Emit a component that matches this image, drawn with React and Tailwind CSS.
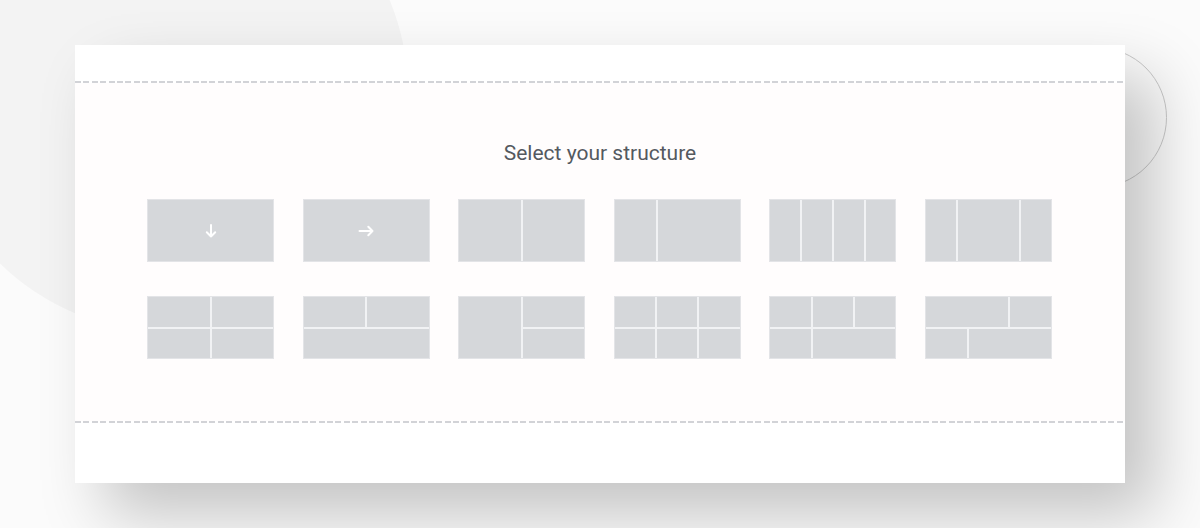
import React from "react";

const cell = "bg-[#d5d7da]";

function Frame({ children, dir = "col" }) {
  return (
    <div
      className={
        "w-[127px] h-[63px] border border-[#e3e4e7] bg-[#f1f2f4] flex gap-[2px] " +
        (dir === "col" ? "flex-col" : "flex-row")
      }
    >
      {children}
    </div>
  );
}

function Row({ parts }) {
  return (
    <div className="flex-1 flex gap-[2px]">
      {parts.map((p, i) => (
        <div key={i} className={cell} style={{ flex: p }} />
      ))}
    </div>
  );
}

function ArrowDown() {
  return (
    <svg width="16" height="16" viewBox="0 0 16 16" fill="none" stroke="#ffffff" strokeWidth="2" strokeLinecap="round" strokeLinejoin="round">
      <path d="M8 2v11.5M3.8 9.3L8 13.5l4.2-4.2" />
    </svg>
  );
}

function ArrowRight() {
  return (
    <svg width="18" height="16" viewBox="0 0 18 16" fill="none" stroke="#ffffff" strokeWidth="2" strokeLinecap="round" strokeLinejoin="round">
      <path d="M2.5 8h13M11.3 3.8L15.5 8l-4.2 4.2" />
    </svg>
  );
}

function Single({ icon }) {
  return (
    <Frame>
      <div className={"flex-1 flex items-center justify-center " + cell}>{icon}</div>
    </Frame>
  );
}

function Dashed() {
  return (
    <div className="h-[2px] w-full bg-[repeating-linear-gradient(90deg,#d2d3d7_0px,#d2d3d7_6px,transparent_6px,transparent_8.4px)]" />
  );
}

export default function App() {
  return (
    <div
      className="relative w-[1200px] h-[528px] overflow-hidden bg-[#fbfbfb]"
      style={{ fontFamily: "Roboto, 'Noto Sans', Arial, sans-serif" }}
    >
      {/* background decorations */}
      <div className="absolute left-[-72px] top-[-148px] w-[480px] h-[480px] rounded-full bg-[#f3f3f3]" />
      <div className="absolute left-[1026px] top-[47px] w-[141px] h-[141px] rounded-full border border-[#c9c9c9]" />

      <div className="relative ml-[75px] mt-[45px] w-[1050px] h-[438px] bg-white flex flex-col shadow-[30px_32px_60px_rgba(0,0,0,0.22)]">
        <div className="h-[36px]" />
        <Dashed />
        <div className="h-[338px] bg-[#fffdfd] flex flex-col items-center pt-[58px]">
          <div className="text-[21px] leading-[24px] text-[#54595f]">Select your structure</div>
          <div className="mt-[34px] ml-[-1px] grid grid-cols-[repeat(6,127px)] gap-x-[28.6px] gap-y-[34px]">
            <Single icon={<ArrowDown />} />
            <Single icon={<ArrowRight />} />
            <Frame dir="row">
              <div className={"flex-1 " + cell} />
              <div className={"flex-1 " + cell} />
            </Frame>
            <Frame dir="row">
              <div className={"flex-[1] " + cell} />
              <div className={"flex-[2] " + cell} />
            </Frame>
            <Frame dir="row">
              <div className={"flex-1 " + cell} />
              <div className={"flex-1 " + cell} />
              <div className={"flex-1 " + cell} />
              <div className={"flex-1 " + cell} />
            </Frame>
            <Frame dir="row">
              <div className={"flex-[1] " + cell} />
              <div className={"flex-[2] " + cell} />
              <div className={"flex-[1] " + cell} />
            </Frame>

            <Frame>
              <Row parts={[1, 1]} />
              <Row parts={[1, 1]} />
            </Frame>
            <Frame>
              <Row parts={[1, 1]} />
              <Row parts={[1]} />
            </Frame>
            <Frame dir="row">
              <div className={"flex-1 " + cell} />
              <div className="flex-1 flex flex-col gap-[2px]">
                <div className={"flex-1 " + cell} />
                <div className={"flex-1 " + cell} />
              </div>
            </Frame>
            <Frame>
              <Row parts={[1, 1, 1]} />
              <Row parts={[1, 1, 1]} />
            </Frame>
            <Frame>
              <Row parts={[1, 1, 1]} />
              <Row parts={[1, 2]} />
            </Frame>
            <Frame>
              <Row parts={[2, 1]} />
              <Row parts={[1, 2]} />
            </Frame>
          </div>
        </div>
        <Dashed />
        <div className="flex-1" />
      </div>
    </div>
  );
}
